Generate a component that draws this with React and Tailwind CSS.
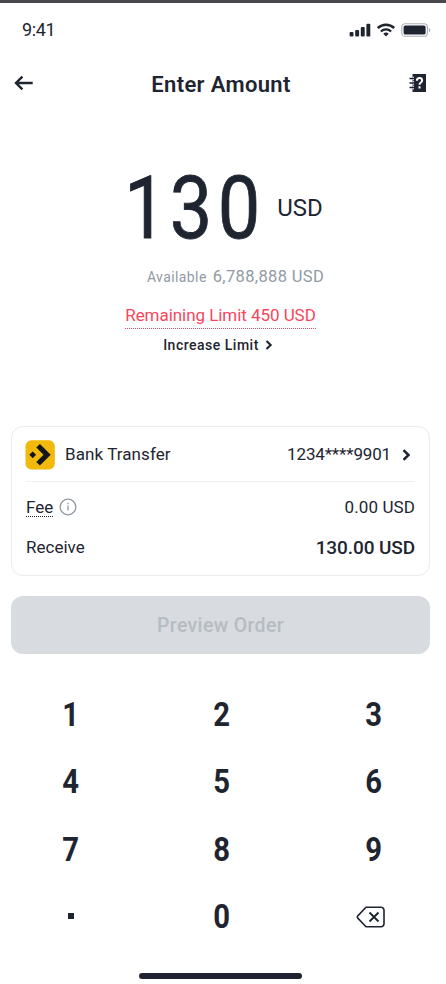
import { useState } from "react";

const KEYS = ["1", "2", "3", "4", "5", "6", "7", "8", "9", ".", "0", "del"];

function StatusBar() {
  return (
    <div className="flex h-[54px] items-center justify-between pl-[22px] pr-[15px]">
      <span className="text-[18px] leading-none tracking-[-0.4px]">9:41</span>
      <div className="flex items-center">
        {/* Signal */}
        <svg width="22" height="14" viewBox="0 0 22 14" fill="currentColor">
          <rect x="0.6" y="9" width="3.9" height="4.6" rx="1" />
          <rect x="6.2" y="7" width="3.9" height="6.6" rx="1" />
          <rect x="11.8" y="4" width="3.9" height="9.6" rx="1" />
          <rect x="17.4" y="0.8" width="3.9" height="12.8" rx="1" />
        </svg>
        {/* Wifi */}
        <svg className="ml-[6px]" width="19" height="14" viewBox="0 0 19 14" fill="none" stroke="currentColor">
          <path d="M0.8 5a12 12 0 0 1 16.4 0" strokeWidth="2.5" />
          <path d="M3.9 8.5a7.4 7.4 0 0 1 10.2 0" strokeWidth="2.3" />
          <path d="M9 13.5 6.3 10.8a4 4 0 0 1 5.4 0Z" fill="currentColor" stroke="none" />
        </svg>
        {/* Battery */}
        <svg className="ml-[5px]" width="30" height="14" viewBox="0 0 30 14">
          <rect x="0.8" y="0.7" width="25.6" height="12.6" rx="3.4" fill="none" stroke="#adb0b5" strokeWidth="1.1" />
          <rect x="2.6" y="2.4" width="22" height="9.2" rx="1.7" fill="currentColor" />
          <path d="M27.8 4.8c2 .8 2 3.6 0 4.4Z" fill="#adb0b5" />
        </svg>
      </div>
    </div>
  );
}

function Header() {
  return (
    <div className="grid h-[54px] grid-cols-[1fr_auto_1fr] items-center pl-[14px] pr-[19px]">
      <button>
        <svg className="-mt-[3px]" width="20" height="16" viewBox="0 0 20 16" fill="none" stroke="currentColor" strokeWidth="2.4">
          <path d="M18.7 8H2M8.4 1.6 2 8l6.4 6.4" />
        </svg>
      </button>
      <h1 className="pt-px pl-px text-[22px] leading-none font-semibold tracking-[0.35px]">Enter Amount</h1>
      <button className="justify-self-end">
        <svg className="-mt-[3px]" width="19" height="20" viewBox="0 0 19 20" fill="none">
          <path d="M4.5 1H18v18H4.5z" fill="#1e2530" />
          <path d="M4.5 5.5H6M4.5 10H6M4.5 14.500H6" stroke="#fff" strokeWidth="3.4" />
          <path d="M1.5 5.5h4.700M1.500 10h4.700M1.500 14.500h4.700" stroke="#1e2530" strokeWidth="1.700" />
          <path
            d="M8.900 7.700c0-1.700 1-2.700 2.600-2.700s2.600 1 2.600 2.400c0 2.200-2.600 2-2.600 4.300M11.500 13.300v2.200"
            stroke="#fff"
            strokeWidth="2"
          />
        </svg>
      </button>
    </div>
  );
}

function Chevron({ className }) {
  return (
    <svg className={className} viewBox="0 0 9 12" fill="none" stroke="currentColor" strokeWidth="2.5">
      <path d="M1.5 1.2 6.5 6l-5 4.8" />
    </svg>
  );
}

function BankIcon() {
  return (
    <svg className="-ml-px" width="30" height="30" viewBox="0 0 30 30">
      <rect x="0.5" y="0.2" width="29.3" height="29.3" rx="6" fill="#f0b90b" />
      <path d="M4.3 14.8 7.700 11.400l3.400 3.400-3.400 3.400Z" fill="#14151a" />
      <path d="m11.300 7.600 3.600-3.600L25.700 14.800 14.900 25.600 11.300 22l7.200-7.200Z" fill="#14151a" />
    </svg>
  );
}

function DeleteIcon() {
  return (
    <svg className="mt-[2px] -ml-[5px]" width="30" height="22" viewBox="0 0 30 22" fill="none" stroke="currentColor" strokeWidth="1.6">
      <path d="M10 1.200h15a3 3 0 0 1 3 3v13.600a3 3 0 0 1-3 3H10L1.800 12.100a1.500 1.500 0 0 1 0-2.200Z" />
      <path d="m13.500 6.500 9 9M22.500 6.500l-9 9" strokeWidth="1.900" />
    </svg>
  );
}

function App() {
  const [amount, setAmount] = useState("130");

  const handleKey = (key) => {
    if (key === "del") return setAmount((prev) => prev.slice(0, -1) || "0");
    if (key === "." && amount.includes(".")) return;
    setAmount((prev) => (prev === "0" && key !== "." ? key : prev + key));
  };

  return (
    <div className="h-[984px] w-[446px] overflow-hidden border-t-3 border-[#48474b] bg-white font-['Roboto',sans-serif] text-[#1e2530]">
      <StatusBar />
      <Header />

      {/* Amount */}
      <div className="mt-[65px] flex flex-col items-center">
        <div className="mr-[4px] flex h-16 items-center">
          <div className="flex text-[88px] leading-none [-webkit-text-stroke:0.8px_#1e2530]">
            {amount.split("").map((digit, i) => (
              <span key={i} className={`flex w-12 scale-x-[0.86] justify-center ${digit === "1" ? "pl-[5px]" : ""}`}>
                {digit}
              </span>
            ))}
          </div>
          <span className="ml-[14px] text-[24px] leading-none tracking-[-0.1px]">USD</span>
        </div>
        <div className="mt-[25px] flex h-6 items-center gap-[6px] pl-[25px] text-[#929aa5]">
          <span className="text-[14px] tracking-[0.4px]">Available</span>
          <span className="text-[16.5px] tracking-[0.35px]">6,788,888 USD</span>
        </div>
        <div className="mt-[14px] mr-[5px] border-b border-dotted border-[#f6465d] text-[17px] leading-[25px] tracking-[-0.05px] text-[#f6465d]">
          Remaining Limit 450 USD
        </div>
        <button className="mt-[6px] mr-[10px] flex h-5 items-center gap-[6px] text-[14px] font-medium tracking-[0.5px]">
          Increase Limit
          <Chevron className="h-[10px] w-[8px]" />
        </button>
      </div>

      {/* Transfer details */}
      <div className="mt-[71px] mr-4 ml-[11px] h-[150px] rounded-xl border border-[#eaebed] px-[14px] text-[17px]">
        <div className="flex h-[55px] items-center border-b border-[#eff0f2] pt-px">
          <BankIcon />
          <span className="ml-[10px] tracking-[0.08px]">Bank Transfer</span>
          <span className="ml-auto tracking-[-0.15px]">1234****9901</span>
          <Chevron className="mr-1 ml-[11px] h-[12px] w-[9px]" />
        </div>
        <div className="flex h-[52px] items-center">
          <span className="border-b border-dotted border-[#1e2530] leading-[17px]">Fee</span>
          <svg className="-mt-[2px] ml-[6px]" width="18" height="18" viewBox="0 0 18 18" fill="none" stroke="#929aa5">
            <circle cx="9" cy="9" r="7.8" strokeWidth="1.3" />
            <path d="M9 7.5v5M9 4.700v1.500" strokeWidth="1.300" />
          </svg>
          <span className="ml-auto tracking-[0.1px]">0.00 USD</span>
        </div>
        <div className="flex h-7 items-center justify-between">
          <span>Receive</span>
          <span className="text-[19px] font-medium tracking-[-0.1px]">130.00 USD</span>
        </div>
      </div>

      <button className="mt-5 ml-[11px] block h-[58px] w-[419px] rounded-xl bg-[#d8dbe0] pt-[2px] text-[19.5px] font-medium tracking-[0.35px] text-[#b7bbc2]">
        Preview Order
      </button>

      {/* Keypad */}
      <div className="mt-[26px] grid auto-rows-[67.5px] grid-cols-[142px_159px_145px] text-[34px] leading-none font-bold">
        {KEYS.map((key) => (
          <button key={key} onClick={() => handleKey(key)} className="flex items-center justify-center">
            {key === "del" ? (
              <DeleteIcon />
            ) : key === "." ? (
              <span className="size-[6px] bg-[#1e2530]" />
            ) : (
              <span className="scale-x-[0.86]">{key}</span>
            )}
          </button>
        ))}
      </div>

      <div className="mt-[23px] ml-[139px] h-[6px] w-[163px] rounded-full bg-[#1e2530]" />
    </div>
  );
}

export default App;
